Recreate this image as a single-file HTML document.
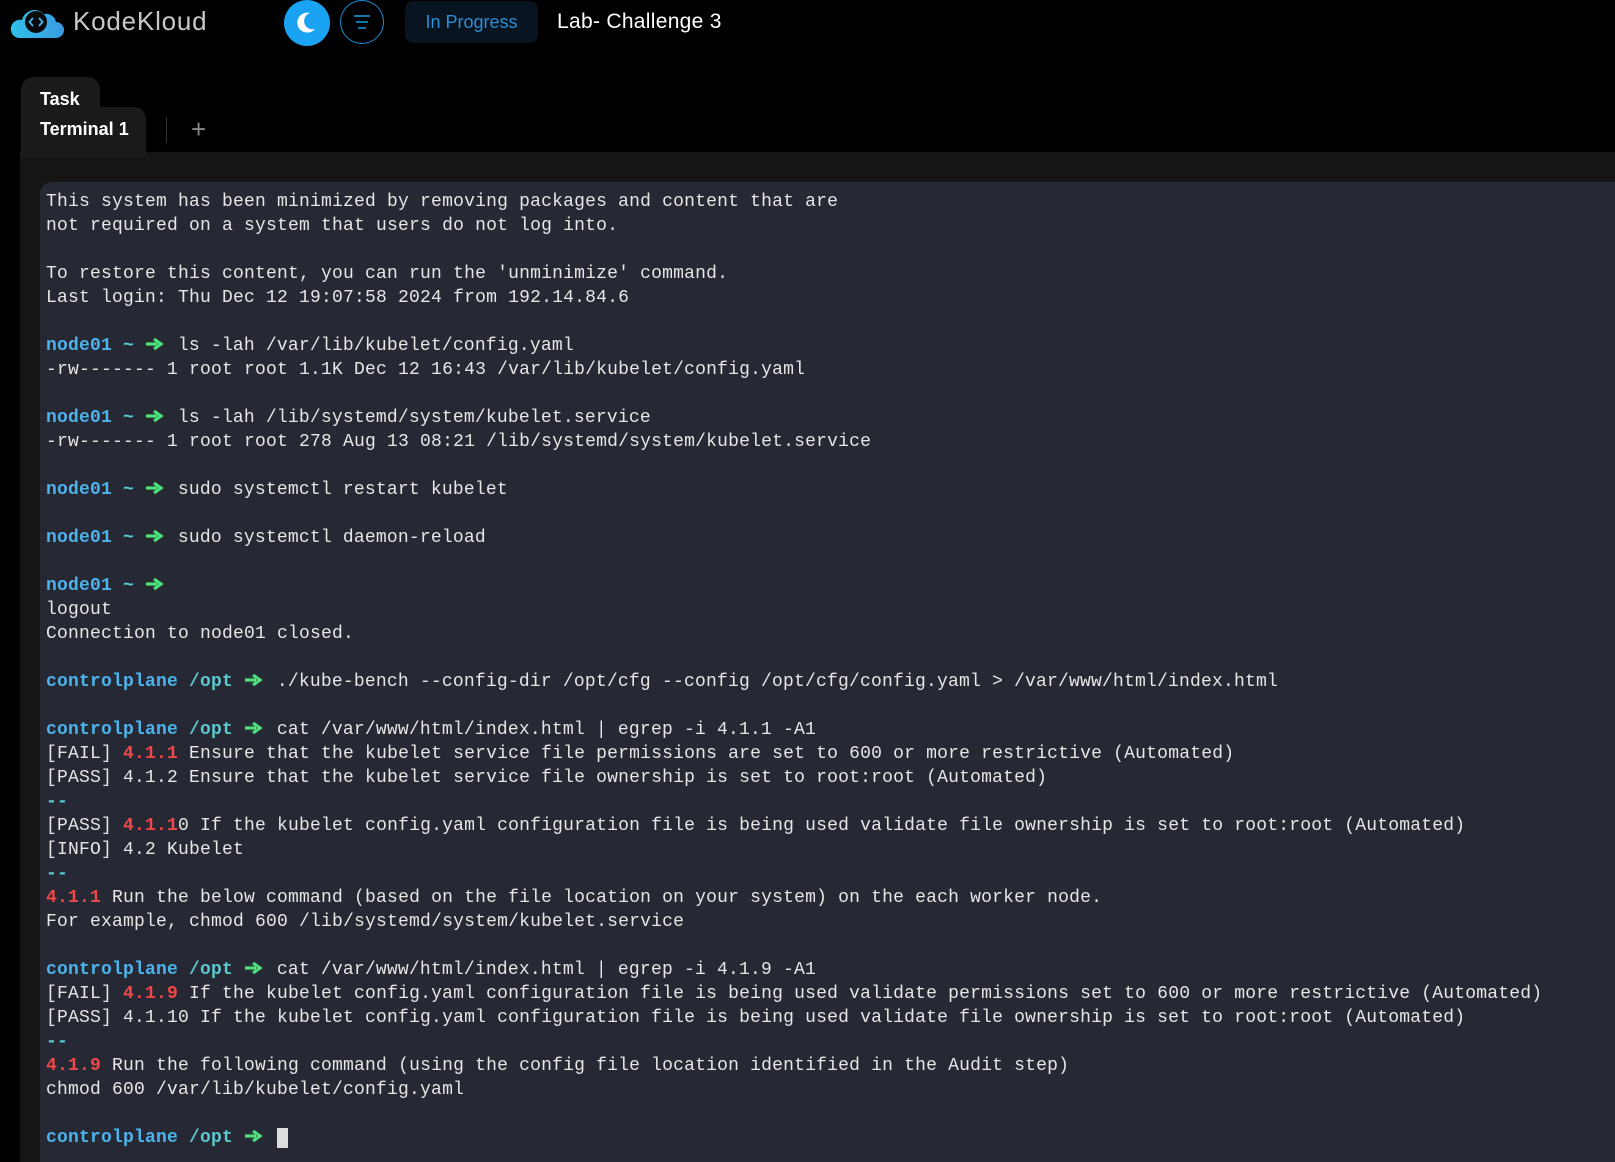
<!DOCTYPE html>
<html><head><meta charset="utf-8"><style>
html,body{margin:0;padding:0;background:#000;width:1615px;height:1162px;overflow:hidden;font-family:"Liberation Sans",sans-serif}
.abs{position:absolute}
.panel{left:20px;top:152px;width:1595px;height:1010px;background:#151515}
.term{left:40px;top:182px;width:1575px;height:980px;background:#262833;border-top-left-radius:12px}
pre{position:absolute;left:46px;top:190px;margin:0;font-family:"Liberation Mono",monospace;font-size:18px;line-height:24px;color:#e6e6e6;letter-spacing:0.2px}
.b{color:#4db3ec;font-weight:bold}
.c{color:#5cc8d0;font-weight:bold}
.g{display:inline-block;width:1ch;height:14px;position:relative;vertical-align:-1px}
.g svg{position:absolute;left:0;top:0}
.r{color:#f04848;font-weight:bold}
</style></head><body>
<svg class="abs" style="left:10px;top:6px" width="54" height="34" viewBox="0 0 54 34">
<defs><linearGradient id="lg" x1="0" x2="1"><stop offset="0" stop-color="#2fc0e8"/><stop offset="1" stop-color="#3a9be0"/></linearGradient></defs>
<path d="M8 32 H46 A8 8 0 0 0 46 16 A10 10 0 0 0 34 8 A13 13 0 0 0 12 14 A9 9 0 0 0 8 32Z" fill="url(#lg)"/>
<circle cx="26" cy="16" r="11" fill="#0a0a0a"/>
<path d="M23 12 L19.5 16 L23 20 M29 12 L32.5 16 L29 20" stroke="#3ab8ec" stroke-width="1.8" fill="none"/>
</svg>
<div class="abs" style="left:73px;top:6px;font-size:26px;color:#c8c8c8;letter-spacing:0.8px">KodeKloud</div>
<div class="abs" style="left:284px;top:0px;width:46px;height:46px;border-radius:50%;background:#1aa3f2"></div>
<svg class="abs" style="left:284px;top:0px" width="46" height="46"><path d="M26 13 A10 10 0 1 0 31 29 A8 8 0 0 1 26 13Z" fill="#fff"/></svg>
<div class="abs" style="left:340px;top:0px;width:42px;height:42px;border-radius:50%;border:1.5px solid #1a8fd8"></div>
<svg class="abs" style="left:340px;top:0px" width="44" height="44"><path d="M14 16H30M16 22H28M18 28H26" stroke="#1a9be8" stroke-width="1.6"/></svg>
<div class="abs" style="left:405px;top:1px;width:133px;height:42px;border-radius:8px;background:#08141f;color:#2a8fd6;font-size:18px;line-height:42px;text-align:center">In Progress</div>
<div class="abs" style="left:557px;top:10px;font-size:21px;color:#fff;letter-spacing:0.3px">Lab- Challenge 3</div>
<div class="abs" style="left:21px;top:77px;width:79px;height:50px;background:#1a1a1a;border-radius:12px 12px 0 0"></div>
<div class="abs" style="left:40px;top:89px;font-size:18px;color:#fff;font-weight:bold">Task</div>
<div class="abs panel"></div>
<div class="abs" style="left:21px;top:107px;width:125px;height:50px;background:#1a1a1a;border-radius:12px 12px 0 0"></div>
<div class="abs" style="left:40px;top:119px;font-size:18px;color:#fff;font-weight:bold">Terminal 1</div>
<div class="abs" style="left:166px;top:117px;width:1px;height:26px;background:#333"></div>
<div class="abs" style="left:191px;top:114px;font-size:26px;color:#888">+</div>
<div class="abs term"></div>
<pre>This system has been minimized by removing packages and content that are
not required on a system that users do not log into.

To restore this content, you can run the 'unminimize' command.
Last login: Thu Dec 12 19:07:58 2024 from 192.14.84.6

<span class="b">node01</span> <span class="c">~</span> <span class="g"><svg width="20" height="14"><path d="M1 7H12M9 2L16 7L9 12" stroke="#4ee07a" stroke-width="3.2" fill="none"/></svg></span>  ls -lah /var/lib/kubelet/config.yaml
-rw------- 1 root root 1.1K Dec 12 16:43 /var/lib/kubelet/config.yaml

<span class="b">node01</span> <span class="c">~</span> <span class="g"><svg width="20" height="14"><path d="M1 7H12M9 2L16 7L9 12" stroke="#4ee07a" stroke-width="3.2" fill="none"/></svg></span>  ls -lah /lib/systemd/system/kubelet.service
-rw------- 1 root root 278 Aug 13 08:21 /lib/systemd/system/kubelet.service

<span class="b">node01</span> <span class="c">~</span> <span class="g"><svg width="20" height="14"><path d="M1 7H12M9 2L16 7L9 12" stroke="#4ee07a" stroke-width="3.2" fill="none"/></svg></span>  sudo systemctl restart kubelet

<span class="b">node01</span> <span class="c">~</span> <span class="g"><svg width="20" height="14"><path d="M1 7H12M9 2L16 7L9 12" stroke="#4ee07a" stroke-width="3.2" fill="none"/></svg></span>  sudo systemctl daemon-reload

<span class="b">node01</span> <span class="c">~</span> <span class="g"><svg width="20" height="14"><path d="M1 7H12M9 2L16 7L9 12" stroke="#4ee07a" stroke-width="3.2" fill="none"/></svg></span>
logout
Connection to node01 closed.

<span class="b">controlplane</span> <span class="c">/opt</span> <span class="g"><svg width="20" height="14"><path d="M1 7H12M9 2L16 7L9 12" stroke="#4ee07a" stroke-width="3.2" fill="none"/></svg></span>  ./kube-bench --config-dir /opt/cfg --config /opt/cfg/config.yaml &gt; /var/www/html/index.html

<span class="b">controlplane</span> <span class="c">/opt</span> <span class="g"><svg width="20" height="14"><path d="M1 7H12M9 2L16 7L9 12" stroke="#4ee07a" stroke-width="3.2" fill="none"/></svg></span>  cat /var/www/html/index.html | egrep -i 4.1.1 -A1
[FAIL] <span class="r">4.1.1</span> Ensure that the kubelet service file permissions are set to 600 or more restrictive (Automated)
[PASS] 4.1.2 Ensure that the kubelet service file ownership is set to root:root (Automated)
<span class="c">--</span>
[PASS] <span class="r">4.1.1</span>0 If the kubelet config.yaml configuration file is being used validate file ownership is set to root:root (Automated)
[INFO] 4.2 Kubelet
<span class="c">--</span>
<span class="r">4.1.1</span> Run the below command (based on the file location on your system) on the each worker node.
For example, chmod 600 /lib/systemd/system/kubelet.service

<span class="b">controlplane</span> <span class="c">/opt</span> <span class="g"><svg width="20" height="14"><path d="M1 7H12M9 2L16 7L9 12" stroke="#4ee07a" stroke-width="3.2" fill="none"/></svg></span>  cat /var/www/html/index.html | egrep -i 4.1.9 -A1
[FAIL] <span class="r">4.1.9</span> If the kubelet config.yaml configuration file is being used validate permissions set to 600 or more restrictive (Automated)
[PASS] 4.1.10 If the kubelet config.yaml configuration file is being used validate file ownership is set to root:root (Automated)
<span class="c">--</span>
<span class="r">4.1.9</span> Run the following command (using the config file location identified in the Audit step)
chmod 600 /var/lib/kubelet/config.yaml

<span class="b">controlplane</span> <span class="c">/opt</span> <span class="g"><svg width="20" height="14"><path d="M1 7H12M9 2L16 7L9 12" stroke="#4ee07a" stroke-width="3.2" fill="none"/></svg></span>  <span style="background:#ddd"> </span></pre>
</body></html>
